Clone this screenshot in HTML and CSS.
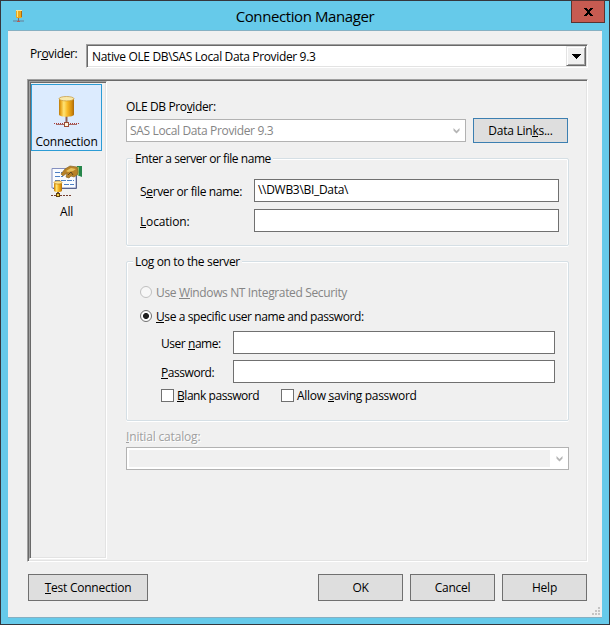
FILE: index.html
```html
<!DOCTYPE html>
<html lang="en">
<head>
<meta charset="utf-8">
<title>Connection Manager</title>
<link rel="stylesheet" href="styles.css">
</head>
<body>
<div class="window">
  <header class="titlebar">
    <svg class="app-icon" width="12" height="14" viewBox="0 0 12 14"><path d="M0 12h11" stroke="#667e94"/><path d="M5.500 8v4" stroke="#8b6666"/><rect x="3" y="1" width="6" height="8" rx="1" fill="#eda81c"/><path d="M4.500 2v6" stroke="#ffe77c"/><path d="M8.500 2v6" stroke="#ad690e"/><path d="M3 1.500h6" stroke="#f7e3a0"/><path d="M4 12.500h3" stroke="#bb5c50"/></svg>
    <h1><span class="t-title">Connection Manager</span></h1>
    <div class="close"><svg width="9" height="8" viewBox="0 0 9 8" shape-rendering="crispEdges"><path d="M0 0h3v1h1v1h1V1h1V0h3v1H8v1H7v1H6v2h1v1h1v1h1v1H6V7H5V6H4v1H3v1H0V7h1V6h1V5h1V3H2V2H1V1H0z"/></svg></div>
  </header>
  <main class="client">
    <div class="provider-row">
      <span class="t-provider">Pr<u>o</u>vider:</span>
      <div class="classic-select">
        <span class="t-native">Native OLE DB\SAS Local Data Provider 9.3</span>
        <div class="drop"><svg width="9" height="5" viewBox="0 0 9 5" shape-rendering="crispEdges"><path d="M0 0h9v1H8v1H7v1H6v1H5v1H4V4H3V3H2V2H1V1H0z"/></svg></div>
      </div>
    </div>
    <div class="notebook">
      <nav class="sidebar">
        <div class="tab selected">
          <svg width="28" height="32" viewBox="0 0 28 32">
            <defs><linearGradient id="gold"><stop offset="0" stop-color="#b9790c"/><stop offset=".12" stop-color="#e9a51c"/><stop offset=".32" stop-color="#ffe476"/><stop offset=".55" stop-color="#f9bb28"/><stop offset=".85" stop-color="#d48b0b"/><stop offset="1" stop-color="#a8690d"/></linearGradient></defs>
            <path d="M1 27.500h26" stroke="#a83c36" stroke-dasharray="1 1"/><path d="M3 28.500h21" stroke="#a86a66"/><path d="M13.500 20v6" stroke="#8b6159" stroke-width="2"/>
            <path d="M6 2.500v16c0 3 15 3 15 0v-16z" fill="url(#gold)"/><ellipse cx="13.500" cy="2.700" rx="7.500" ry="2.200" fill="#f8e9ac" stroke="#c79734" stroke-width=".7"/>
            <rect x="11.500" y="26.500" width="4" height="4" fill="#fff7df" stroke="#9b4c38"/>
          </svg>
          <span class="t-conn">Connection</span>
        </div>
        <div class="tab all">
          <svg width="34" height="32" viewBox="0 0 34 32">
            <path d="M2 3.500h24v19.500H2z" fill="#fafcff" stroke="#8490c0"/><path d="M3 23.500h23.500V4" fill="none" stroke="#59648f"/>
            <path d="M5 7.500h10M5 11.500h8M5 15.500h19M14 19.500h10" stroke="#4d80c4" stroke-dasharray="5 1"/>
            <path d="M27 1h5v11l-5-2z" fill="#26864a"/><path d="M26 2h3v8h-3z" fill="#91b85c"/>
            <path d="M27 2l-7-1-5 3-4 5 2 2 4-3-1 4 3 1 2-2 3 1 3-2 1-3z" fill="#b88227" stroke="#8b6a2b" stroke-width=".7"/><path d="M16 6l5-3 5 1-3 2-5 1" fill="#e8c05c"/><path d="M18 10l3-3 2 3" fill="none" stroke="#5f481f"/>
            <path d="M1 30.500h21" stroke="#733d2e" stroke-dasharray="2 1"/><path d="M8 25v4" stroke="#6f5546" stroke-width="2"/><path d="M4 17.500v8c0 2 8 2 8 0v-8z" fill="url(#gold)"/><ellipse cx="8" cy="17.500" rx="4" ry="1.600" fill="#ffe790" stroke="#bd7c17" stroke-width=".7"/><rect x="6.500" y="28.500" width="3" height="3" fill="#f2ca45" stroke="#60420f"/>
          </svg>
          <span class="t-all">All</span>
        </div>
      </nav>
      <section class="page">
        <div class="label"><span class="t-ole">OLE DB Pro<u>v</u>ider:</span></div>
        <div class="links-row">
          <div class="select-off"><span class="t-sas">SAS Local Data Provider 9.3</span><svg width="8" height="6" viewBox="0 0 8 6"><path d="M.5 0L3.500 3l3-3v2.500L3.500 5.500l-3-3z" fill="#b5b5b5"/></svg></div>
          <div class="button focus"><span class="t-links">Data Lin<u>k</u>s...</span></div>
        </div>
        <div class="group server">
          <div class="legend"><span class="t-enter">Enter a server or file name</span></div>
          <div class="field"><span class="t-server">S<u>e</u>rver or file name:</span><div class="input"><span class="t-path">\\DWB3\BI_Data\</span></div></div>
          <div class="field"><span class="t-loc"><u>L</u>ocation:</span><div class="input"></div></div>
        </div>
        <div class="group logon">
          <div class="legend"><span class="t-log">Log on to the server</span></div>
          <div class="choice off"><i class="radio"></i><span class="t-nt">Use <u>W</u>indows NT Integrated Security</span></div>
          <div class="choice"><i class="radio on"></i><span class="t-spec"><u>U</u>se a specific user name and password:</span></div>
          <div class="field cred"><span class="t-user">User <u>n</u>ame:</span><div class="input"></div></div>
          <div class="field cred"><span class="t-pass"><u>P</u>assword:</span><div class="input"></div></div>
          <div class="checks"><div class="check"><i class="box"></i><span class="t-blank"><u>B</u>lank password</span></div><div class="check"><i class="box"></i><span class="t-allow">Allow <u>s</u>aving password</span></div></div>
        </div>
        <div class="label catalog"><span class="t-cat"><u>I</u>nitial catalog:</span></div>
        <div class="select-off empty"><div class="blank"></div><svg width="8" height="6" viewBox="0 0 8 6"><path d="M.5 0L3.500 3l3-3v2.500L3.500 5.500l-3-3z" fill="#b5b5b5"/></svg></div>
      </section>
    </div>
    <footer class="actions">
      <div class="button test"><span class="t-test"><u>T</u>est Connection</span></div>
      <div class="button"><span class="t-ok">OK</span></div>
      <div class="button"><span class="t-cancel">Cancel</span></div>
      <div class="button"><span class="t-help">Help</span></div>
    </footer>
    <svg class="grip" width="8" height="8" viewBox="0 0 8 8" shape-rendering="crispEdges"><path d="M6 0h2v2H6zM3 3h2v2H3zM6 3h2v2H6zM0 6h2v2H0zM3 6h2v2H3zM6 6h2v2H6z" fill="#c4c4c4"/></svg>
  </main>
</div>
</body>
</html>
```
FILE: styles.css
```css
* { box-sizing: border-box; }
body { margin: 0; font: 12px/16px "Open Sans", sans-serif; color: #000; }
span { white-space: nowrap; letter-spacing: -.25px; }
u { text-decoration: none; background: linear-gradient(currentColor, currentColor) 0 14px / 100% 1px no-repeat; }
svg { display: block; flex: none; }
.window { width: 610px; height: 625px; background: #66caea; border: 1px solid #35373d; padding: 0 7px; }
.titlebar { height: 29px; position: relative; display: flex; justify-content: center; }
.titlebar h1 { margin: 5px 0 0; font: 15px/20px "Open Sans", sans-serif; }
.app-icon { position: absolute; left: 5px; top: 8px; }
.close { position: absolute; right: -3px; top: -1px; width: 34px; height: 23px; background: #c75b51; border: 1px solid #593432; display: flex; align-items: center; justify-content: center; }
.client { position: relative; width: 594px; height: 588px; background: #f0f0f0; border-top: 1px solid #86b0c2; border-bottom: 1px solid #86b0c2; padding: 13px 14px 0 19px; }
.provider-row { display: flex; justify-content: space-between; padding-left: 3px; }
.provider-row > span { margin-top: 2px; }
.classic-select { width: 502px; height: 24px; background: #fff; border: 1px solid; border-color: #a0a0a0 #fff #fff #a0a0a0; box-shadow: inset 1px 1px #696969, inset -1px -1px #e3e3e3; display: flex; justify-content: space-between; padding: 1px 1px 1px 5px; }
.classic-select > span { margin-top: 3px; }
.drop { width: 20px; height: 20px; background: #f0f0f0; border: 1px solid; border-color: #e3e3e3 #696969 #696969 #e3e3e3; box-shadow: inset 1px 1px #fff, inset -1px -1px #a0a0a0; display: grid; place-items: center; }
.notebook { margin-top: 11px; width: 561px; height: 483px; border: 1px solid; border-color: #a0a0a0 #fff #fff #a0a0a0; box-shadow: inset 1px 1px #696969, inset -1px -1px #e3e3e3; padding: 1px; display: flex; }
.sidebar { width: 78px; height: 478px; border: 1px solid; border-color: #a0a0a0 #fff #fff #a0a0a0; box-shadow: inset 1px 1px #696969, inset -1px -1px #e3e3e3; padding: 2px 1px; }
.tab { width: 71px; height: 67px; display: flex; flex-direction: column; align-items: center; }
.tab.selected { background: #dcebfe; border: 1px solid #2c9cd5; padding-top: 11px; }
.selected span { margin-top: 6px; }
.tab.all { padding-top: 14px; }
.all span { margin-top: 7px; }
.page { padding: 18px 0 0 19px; width: 462px; }
.links-row { display: flex; align-items: center; gap: 7px; margin-top: 3px; height: 25px; }
.select-off { width: 340px; height: 23px; background: #fff; border: 1px solid #b2b2b2; color: #858585; display: flex; align-items: center; justify-content: space-between; padding: 0 4px 0 3px; }
.select-off span { padding-top: 1px; }
.button { width: 85px; height: 27px; background: #dedede; border: 1px solid #707070; display: flex; align-items: center; justify-content: center; }
.button.focus { width: 95px; height: 25px; border-color: #3c7fb1; }
.group { position: relative; width: 443px; height: 88px; margin-top: 15px; border: 1px solid #d5dfe5; border-radius: 2px; box-shadow: inset 1px 1px #fff, 0 1px #fff, inset -1px 0 #fff; padding: 20px 9px 0 13px; }
.legend { position: absolute; left: 6px; top: -8px; padding: 0 2px; background: #f0f0f0; }
.field { display: flex; justify-content: space-between; align-items: center; height: 23px; }
.field > span { padding-top: 2px; }
.field + .field { margin-top: 7px; }
.input { width: 305px; height: 23px; border: 1px solid #707070; background: #fff; padding: 1px 3px; }
.input span { display: block; margin-top: 1px; }
.logon { height: 160px; margin-top: 15px; padding-top: 22px; }
.choice { display: flex; height: 16px; margin-bottom: 8px; }
.choice span, .check span { padding-top: 1px; }
.off { color: #858585; }
.radio { width: 12px; height: 12px; border: 1px solid #707070; border-radius: 50%; background: #fff; margin: 2px 4px 0 0; }
.off .radio { border-color: #c0c0c0; background: #f7f7f7; }
.radio.on { background: radial-gradient(circle, #222 0 2.600px, #fff 3.400px); }
.field.cred { padding: 0 4px 0 21px; margin-top: -1px; }
.field.cred + .field.cred { margin-top: 6px; }
.cred .input { width: 322px; }
.checks { display: flex; height: 17px; margin: 4px 0 0 21px; }
.check { width: 120px; display: flex; }
.box { width: 13px; height: 13px; border: 1px solid #707070; background: #fff; flex: none; margin: 2px 3px 0 0; }
.catalog { margin-top: 8px; color: #a0a0a0; text-shadow: 1px 1px #fff; }
.select-off.empty { width: 443px; margin-top: 2px; padding-left: 2px; }
.blank { width: 421px; height: 17px; background: #f0f0f0; }
.actions { display: flex; gap: 7px; margin: 12px 0 0 1px; }
.actions .test { width: 120px; margin-right: 163px; }
.grip { position: absolute; right: 2px; bottom: 2px; }
.t-title { letter-spacing: -.4px; }
.t-provider, .t-native, .t-sas, .t-log { letter-spacing: -.35px; }
.t-ole, .t-server, .t-nt { letter-spacing: -.36px; }
.t-enter, .t-user, .t-pass, .t-blank { letter-spacing: -.45px; }
.t-spec { letter-spacing: -.41px; }
.t-allow, .t-path { letter-spacing: -.3px; }
.t-conn, .t-cat, .t-loc { letter-spacing: -.17px; }
```
